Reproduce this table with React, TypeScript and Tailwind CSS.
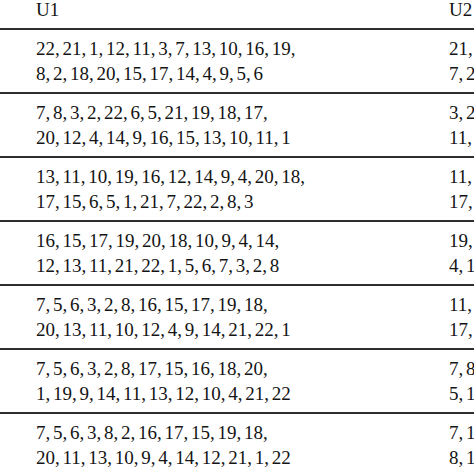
const rows: [string[], string[]][] = [
  [
    ["22,21,1,12,11,3,7,13,10,16,19,", "8,2,18,20,15,17,14,4,9,5,6"],
    ["21,22,1,12,3,11,7,13,10,16,19,", "7,2,18,20,15,17,14,4,9,5,6"],
  ],
  [
    ["7,8,3,2,22,6,5,21,19,18,17,", "20,12,4,14,9,16,15,13,10,11,1"],
    ["3,2,7,8,22,6,5,21,19,18,17,", "11,20,12,4,14,9,16,15,13,10,1"],
  ],
  [
    ["13,11,10,19,16,12,14,9,4,20,18,", "17,15,6,5,1,21,7,22,2,8,3"],
    ["11,13,10,19,16,12,14,9,4,20,18,", "17,15,6,5,1,21,7,22,2,8,3"],
  ],
  [
    ["16,15,17,19,20,18,10,9,4,14,", "12,13,11,21,22,1,5,6,7,3,2,8"],
    ["19,16,15,17,20,18,10,9,14,12,", "4,13,11,21,22,1,5,6,7,3,2,8"],
  ],
  [
    ["7,5,6,3,2,8,16,15,17,19,18,", "20,13,11,10,12,4,9,14,21,22,1"],
    ["11,7,5,6,3,2,8,16,15,19,18,", "17,20,13,10,12,4,9,14,21,22,1"],
  ],
  [
    ["7,5,6,3,2,8,17,15,16,18,20,", "1,19,9,14,11,13,12,10,4,21,22"],
    ["7,8,6,3,2,17,15,16,18,20,1,", "5,19,9,14,11,13,12,10,4,21,22"],
  ],
  [
    ["7,5,6,3,8,2,16,17,15,19,18,", "20,11,13,10,9,4,14,12,21,1,22"],
    ["7,16,5,6,3,2,17,15,19,18,20,", "8,11,13,10,9,4,14,12,21,1,22"],
  ],
];

// commas in the original are set with a little air after them
function Seq({ text }: { text: string }) {
  return <div className="whitespace-nowrap [word-spacing:-2px]">{text.split(",").join(", ")}</div>;
}

export default function App() {
  return (
    <div className="w-[474px] h-[474px] overflow-hidden bg-white text-[#141414] text-[19px] font-['Liberation_Serif',serif]">
      <div className="grid grid-cols-[413px_1fr] pl-[36px] pb-[8px] leading-[20px]">
        <div>U1</div>
        <div>U2</div>
      </div>
      {rows.map(([u1, u2], i) => (
        <div
          key={i}
          className="grid grid-cols-[413px_1fr] pl-[36px] pt-[6px] pb-[6px] border-t-2 border-[#2e2e2e] leading-[25px]"
        >
          <div>
            {u1.map((t) => (
              <Seq key={t} text={t} />
            ))}
          </div>
          <div className="overflow-hidden">
            {u2.map((t) => (
              <Seq key={t} text={t} />
            ))}
          </div>
        </div>
      ))}
    </div>
  );
}
